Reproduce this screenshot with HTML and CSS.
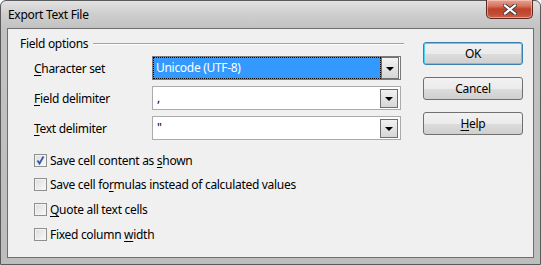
FILE: index.html
```html
<!DOCTYPE html>
<html>
<head>
<meta charset="utf-8">
<link rel="stylesheet" href="styles.css">
</head>
<body>
<div class="window">
  <div class="titlebar">
    <span class="title">Export Text File</span>
    <div class="close">
      <svg width="14" height="11" viewBox="0 0 14 11"><path d="M2 1.5 L12 9.5 M12 1.5 L2 9.5" stroke="#3a3a3a" stroke-width="4" stroke-linecap="square"/><path d="M2 1.5 L12 9.5 M12 1.5 L2 9.5" stroke="#fff" stroke-width="2.2" stroke-linecap="square"/></svg>
    </div>
  </div>
  <div class="client">
    <div class="main">
      <div class="legend"><span>Field options</span><div class="rule"></div></div>
      <div class="field">
        <label class="lbl"><u>C</u>haracter set</label>
        <div class="combo focused">
          <div class="value"><span class="sel">Unicode (UTF-8)</span></div>
          <div class="btn"><span class="arrow"></span></div>
        </div>
      </div>
      <div class="field">
        <label class="lbl"><u>F</u>ield delimiter</label>
        <div class="combo">
          <div class="value">,</div>
          <div class="btn"><span class="arrow"></span></div>
        </div>
      </div>
      <div class="field">
        <label class="lbl"><u>T</u>ext delimiter</label>
        <div class="combo">
          <div class="value">"</div>
          <div class="btn"><span class="arrow"></span></div>
        </div>
      </div>
      <div class="checks">
        <div class="check"><span class="box"><svg width="11" height="11" viewBox="0 0 11 11"><path d="M2.5 5.5 L4.5 8.5 L8.5 1.5" fill="none" stroke="#3657a8" stroke-width="1.8"/></svg></span><span>Save cell content as <u>s</u>hown</span></div>
        <div class="check"><span class="box"></span><span>Save cell fo<u>r</u>mulas instead of calculated values</span></div>
        <div class="check"><span class="box"></span><span><u>Q</u>uote all text cells</span></div>
        <div class="check"><span class="box"></span><span>Fixed column <u>w</u>idth</span></div>
      </div>
    </div>
    <div class="buttons">
      <div class="button default">OK</div>
      <div class="button">Cancel</div>
      <div class="button"><span><u>H</u>elp</span></div>
    </div>
  </div>
</div>
</body>
</html>
```

FILE: styles.css
```css
* { box-sizing: border-box; }
html, body { margin: 0; padding: 0; background: #fff; }
body {
  font-family: "Noto Sans", "Open Sans", sans-serif;
  font-size: 12px;
  letter-spacing: -0.3px;
  color: #000;
}
u { text-decoration: underline; text-underline-offset: 2px; }
.window {
  width: 541px;
  height: 265px;
  border: 1px solid #5a5a5a;
  border-radius: 6px 6px 0 0;
  background: linear-gradient(#e2e2e2 0px, #cdcdcd 14px, #c2c2c2 28px, #bdbdbd 100%);
  display: flex;
  flex-direction: column;
  padding: 0 6px 6px 6px;
}
.titlebar {
  height: 27px;
  display: flex;
  align-items: flex-start;
  justify-content: space-between;
}
.title {
  margin-top: 6px;
  margin-left: 1px;
  line-height: 16px;
}
.close {
  width: 47px;
  height: 19px;
  margin-top: -1px;
  margin-right: 1px;
  border: 1px solid #5a2a24;
  border-top: none;
  border-radius: 0 0 5px 5px;
  background: linear-gradient(#e6a394 0px, #d7735e 6px, #c0412b 9px, #c24a33 14px, #d26a4f 19px);
  box-shadow: inset 0 0 0 1px rgba(255,220,210,0.5);
  display: flex;
  align-items: center;
  justify-content: center;
}
.client {
  flex: 1;
  border: 1px solid #6e6e6e;
  background: #f0f0f0;
  display: flex;
  padding: 7px 0 0 0;
}
.main {
  width: 404px;
  padding-left: 12px;
}
.legend {
  display: flex;
  align-items: center;
  height: 16px;
  line-height: 16px;
}
.legend .rule {
  flex: 1;
  height: 1px;
  background: #a0a0a0;
  border-bottom: 1px solid #fff;
  margin-left: 5px;
  margin-right: 8px;
  margin-top: -1px;
  box-sizing: content-box;
}
.field {
  display: flex;
  align-items: center;
  height: 24px;
  margin-top: 6px;
  padding-left: 14px;
}
.legend + .field { margin-top: 4px; }
.lbl { width: 118px; }
.combo {
  width: 249px;
  height: 24px;
  border: 1px solid #ababab;
  background: #fff;
  display: flex;
  align-items: center;
  padding: 0 2px 0 1px;
}
.combo.focused { border-color: #7a7a7a; padding: 0 1px 0 0; }
.value {
  flex: 1;
  padding-left: 3px;
  line-height: 16px;
}
.combo.focused .value {
  align-self: stretch;
  border: 1px dotted #000;
  background: #3399ff;
  color: #fff;
  display: flex;
  align-items: center;
  padding-left: 2px;
}
.btn {
  width: 18px;
  height: 19px;
  border: 1px solid #707070;
  background: linear-gradient(#f2f2f2, #e4e4e4 50%, #d6d6d6);
  display: flex;
  align-items: center;
  justify-content: center;
}
.combo.focused .btn { height: 22px; }
.arrow {
  width: 0; height: 0;
  border-left: 4px solid transparent;
  border-right: 4px solid transparent;
  border-top: 4px solid #000;
  margin-top: 1px;
}
.checks {
  margin-top: 8px;
  padding-left: 14px;
}
.check {
  height: 25px;
  display: flex;
  align-items: center;
}
.check:first-child { height: 24px; }
.box {
  width: 13px;
  height: 13px;
  border: 1px solid #8e8f8f;
  background: linear-gradient(135deg, #dcdcdc, #fafafa);
  box-shadow: inset 0 0 0 1px #f4f4f4;
  margin-right: 3px;
  display: flex;
  align-items: center;
  justify-content: center;
}
.box svg { display: block; }
.buttons {
  padding-left: 11px;
  padding-top: 6px;
  display: flex;
  flex-direction: column;
  gap: 12px;
}
.button {
  width: 100px;
  height: 23px;
  border: 1px solid #707070;
  border-radius: 3px;
  background: linear-gradient(#f2f2f2 0%, #ebebeb 50%, #dddddd 51%, #cfcfcf 100%);
  display: flex;
  align-items: center;
  justify-content: center;
  line-height: 16px;
}
.button.default {
  border-color: #3c7fb1;
  box-shadow: inset 0 0 0 1px #48d4f8;
}
```
